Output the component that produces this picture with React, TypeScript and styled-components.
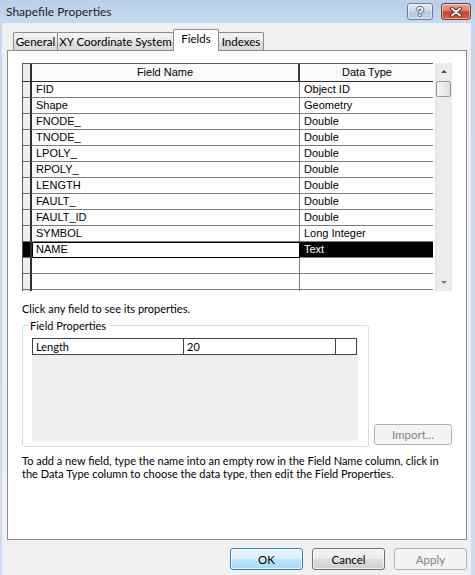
import React from "react";
import styled, { createGlobalStyle } from "styled-components";

const GlobalStyle = createGlobalStyle`
  html, body {
    margin: 0;
    padding: 0;
    background: #c8daf0;
  }
  body {
    font-family: Lato, "Noto Sans", "Liberation Sans", sans-serif;
    font-size: 11px;
    color: #000;
  }
`;

type FieldRow = { name: string; type: string };

const fields: FieldRow[] = [
  { name: "FID", type: "Object ID" },
  { name: "Shape", type: "Geometry" },
  { name: "FNODE_", type: "Double" },
  { name: "TNODE_", type: "Double" },
  { name: "LPOLY_", type: "Double" },
  { name: "RPOLY_", type: "Double" },
  { name: "LENGTH", type: "Double" },
  { name: "FAULT_", type: "Double" },
  { name: "FAULT_ID", type: "Double" },
  { name: "SYMBOL", type: "Long Integer" },
  { name: "NAME", type: "Text" },
  { name: "", type: "" },
  { name: "", type: "" },
  { name: "", type: "" },
];
const selectedIndex = 10;

/* window frame + caption */
const Window = styled.div`
  width: 475px;
  height: 575px;
  box-sizing: border-box;
  padding: 0 4px 0 2px;
  display: flex;
  flex-direction: column;
  overflow: hidden;
  background: linear-gradient(180deg, #b9cfe9 0px, #c6d9ef 22px, #cddcee 100%);
`;

const TitleBar = styled.div`
  height: 23px;
  flex: none;
  display: flex;
  align-items: flex-start;
  padding-left: 4px;
`;

const Caption = styled.div`
  flex: 1;
  font-size: 12px;
  line-height: 23px;
  color: #1e1e1e;
`;

const CaptionButtons = styled.div`
  display: flex;
  gap: 8px;
  padding-top: 3px;
`;

const CaptionButton = styled.div<{ $close?: boolean }>`
  width: ${(p) => (p.$close ? 30 : 26)}px;
  height: 17px;
  box-sizing: border-box;
  border: 1px solid ${(p) => (p.$close ? "#7a3b30" : "#6f7d92")};
  border-radius: 3px;
  display: flex;
  align-items: center;
  justify-content: center;
  background: ${(p) =>
    p.$close
      ? "linear-gradient(180deg, #e9a99a 0%, #d77a68 45%, #c2442e 55%, #d0654b 100%)"
      : "linear-gradient(180deg, #e6eef8 0%, #ccdaec 45%, #b4c8e2 55%, #c4d6ec 100%)"};
  box-shadow: inset 0 0 0 1px rgba(255, 255, 255, 0.45);
`;

const HelpGlyph = styled.span`
  font-family: "Liberation Sans", sans-serif;
  font-weight: bold;
  font-size: 13px;
  line-height: 13px;
  color: #fff;
  text-shadow: -1px 0 #5a6678, 1px 0 #5a6678, 0 -1px #5a6678, 0 1px #5a6678;
`;

/* dialog client area */
const Body = styled.div`
  flex: 1;
  background: #f0f0f0;
  padding: 6px 4px 0 5px;
  display: flex;
  flex-direction: column;
`;

const TabStrip = styled.div`
  height: 22px;
  display: flex;
  align-items: flex-end;
  padding-left: 6px;
  margin-bottom: -1px;
  position: relative;
  z-index: 1;
`;

const Tab = styled.div<{ $w: number; $active?: boolean }>`
  width: ${(p) => p.$w}px;
  height: ${(p) => (p.$active ? 22 : 18)}px;
  margin-bottom: ${(p) => (p.$active ? 0 : 1)}px;
  margin-left: -1px;
  box-sizing: border-box;
  border: 1px solid #898c95;
  border-bottom: none;
  border-radius: 2px 2px 0 0;
  display: flex;
  align-items: ${(p) => (p.$active ? "flex-start" : "center")};
  justify-content: center;
  padding-top: ${(p) => (p.$active ? 2 : 0)}px;
  font-size: 11.5px;
  white-space: nowrap;
  position: relative;
  z-index: ${(p) => (p.$active ? 2 : 1)};
  background: ${(p) =>
    p.$active
      ? "#fff"
      : "linear-gradient(180deg, #f3f3f3 0%, #ebebeb 50%, #dedede 51%, #d9d9d9 100%)"};
  &:first-child {
    margin-left: 0;
  }
`;

const Panel = styled.div`
  height: 490px;
  flex: none;
  box-sizing: border-box;
  background: #fff;
  border: 1px solid #898c95;
  padding: 12px 14px 0 14px;
  display: flex;
  flex-direction: column;
`;

/* field table */
const GridArea = styled.div`
  display: flex;
  gap: 2px;
  height: 228px;
  flex: none;
`;

const GridView = styled.div`
  width: 413px;
  height: 228px;
  overflow: hidden;
  font-family: "Liberation Sans", Arial, sans-serif;
  font-size: 11px;
`;

const GridRow = styled.div<{ $header?: boolean }>`
  display: grid;
  grid-template-columns: 10px 268px 135px;
  height: ${(p) => (p.$header ? 19 : 16)}px;
  box-sizing: border-box;
  border-top: ${(p) => (p.$header ? "1px solid #5c5c5c" : "none")};
`;

const RowHandle = styled.div<{ $active?: boolean; $header?: boolean }>`
  box-sizing: border-box;
  border-left: 1px solid #5c5c5c;
  border-right: 2px solid #2e2e2e;
  border-bottom: 1px solid ${(p) => (p.$header ? "#2e2e2e" : "#6b6b6b")};
  background: ${(p) => (p.$active ? "#000" : "#efefef")};
`;

const HeadCell = styled.div`
  box-sizing: border-box;
  background: #fafafa;
  border-right: 2px solid #3a3a3a;
  border-bottom: 1px solid #2e2e2e;
  text-align: center;
  line-height: 17px;
  &:last-child {
    border-right-width: 1px;
  }
`;

const Cell = styled.div<{ $focus?: boolean; $picked?: boolean }>`
  box-sizing: border-box;
  border-right: 1px solid ${(p) => (p.$focus ? "#000" : "#7c7c7c")};
  border-bottom: 1px solid ${(p) => (p.$focus ? "#000" : "#7c7c7c")};
  padding-left: 4px;
  line-height: 15px;
  white-space: nowrap;
  background: ${(p) => (p.$picked ? "#000" : "#fff")};
  color: ${(p) => (p.$picked ? "#fff" : "#000")};
  box-shadow: ${(p) => (p.$focus ? "inset 1px 1px 0 #000" : "none")};
`;

const ScrollBar = styled.div`
  width: 17px;
  height: 228px;
  display: flex;
  flex-direction: column;
  background: linear-gradient(90deg, #e3e3e3 0%, #ececec 20%, #ededed 80%, #e6e6e6 100%);
`;

const ScrollArrow = styled.div<{ $down?: boolean }>`
  height: 17px;
  flex: none;
  display: flex;
  align-items: center;
  justify-content: center;
  &::after {
    content: "";
    width: 0;
    height: 0;
    border-left: 3px solid transparent;
    border-right: 3px solid transparent;
    ${(p) => (p.$down ? "border-top: 3px solid #7a7a7a;" : "border-bottom: 3px solid #4f4f4f;")}
  }
`;

const ScrollThumb = styled.div`
  height: 16px;
  margin: 1px 1px 0 1px;
  box-sizing: border-box;
  border: 1px solid #979797;
  border-radius: 2px;
  background: linear-gradient(90deg, #f4f4f4 0%, #ececec 50%, #dedede 100%);
`;

const ScrollTrack = styled.div`
  flex: 1;
`;

/* lower half of the page */
const Hint = styled.div`
  margin-top: 10px;
  line-height: 15px;
  white-space: nowrap;
`;

const GroupRow = styled.div`
  display: flex;
  align-items: flex-end;
  gap: 5px;
  margin-top: 2px;
`;

const GroupBox = styled.fieldset`
  margin: 0;
  width: 347px;
  box-sizing: border-box;
  border: 1px solid #d5dfe5;
  border-radius: 3px;
  padding: 5px 9px 5px 9px;
`;

const GroupLabel = styled.legend`
  padding: 0 2px;
  margin-left: -4px;
  line-height: 15px;
`;

const PropArea = styled.div`
  width: 326px;
  height: 103px;
  background: #efefef;
`;

const PropRow = styled.div`
  display: grid;
  grid-template-columns: 151px 152px 21px;
  height: 17px;
  box-sizing: border-box;
  border: 1px solid #444;
  border-right: none;
  background: #fff;
  width: 325px;
`;

const PropCell = styled.div`
  border-right: 1px solid #444;
  padding-left: 3px;
  line-height: 15px;
`;

const DialogButton = styled.div<{ $default?: boolean; $disabled?: boolean; $w?: number }>`
  width: ${(p) => p.$w ?? 73}px;
  height: ${(p) => (p.$w ? 21 : 22)}px;
  box-sizing: border-box;
  border: 1px solid ${(p) => (p.$disabled ? "#adb2b5" : p.$default ? "#3c7fb1" : "#707070")};
  border-radius: 3px;
  display: flex;
  align-items: center;
  justify-content: center;
  font-size: 11.5px;
  color: ${(p) => (p.$disabled ? "#838383" : "#000")};
  background: ${(p) =>
    p.$disabled
      ? "#f4f4f4"
      : p.$default
      ? "linear-gradient(180deg, #eaf6fd 0%, #d9f0fc 50%, #bee6fd 51%, #a7d9f5 100%)"
      : "linear-gradient(180deg, #f2f2f2 0%, #ebebeb 50%, #dddddd 51%, #cfcfcf 100%)"};
  box-shadow: ${(p) => (p.$disabled ? "none" : "inset 0 0 0 1px rgba(255,255,255,0.7)")};
`;

const ImportButton = styled(DialogButton)`
  margin-bottom: 2px;
`;

const Note = styled.div`
  margin-top: 7px;
  line-height: 13px;
  white-space: nowrap;
`;

const Footer = styled.div`
  display: flex;
  justify-content: flex-end;
  gap: 9px;
  padding-top: 8px;
`;

const CloseIcon = () => (
  <svg width="12" height="10" viewBox="0 0 12 10">
    <path d="M2 1.5 L10 8.5 M10 1.5 L2 8.5" stroke="#5b2219" strokeWidth="4" strokeLinecap="round" />
    <path d="M2 1.5 L10 8.5 M10 1.5 L2 8.5" stroke="#fff" strokeWidth="2" strokeLinecap="round" />
  </svg>
);

const App = () => {
  return (
    <>
      <GlobalStyle />
      <Window>
        <TitleBar>
          <Caption>Shapefile Properties</Caption>
          <CaptionButtons>
            <CaptionButton>
              <HelpGlyph>?</HelpGlyph>
            </CaptionButton>
            <CaptionButton $close>
              <CloseIcon />
            </CaptionButton>
          </CaptionButtons>
        </TitleBar>
        <Body>
          <TabStrip>
            <Tab $w={45}>General</Tab>
            <Tab $w={117}>XY Coordinate System</Tab>
            <Tab $w={46} $active>
              Fields
            </Tab>
            <Tab $w={46}>Indexes</Tab>
          </TabStrip>
          <Panel>
            <GridArea>
              <GridView>
                <GridRow $header>
                  <RowHandle $header />
                  <HeadCell>Field Name</HeadCell>
                  <HeadCell>Data Type</HeadCell>
                </GridRow>
                {fields.map((f, i) => (
                  <GridRow key={i}>
                    <RowHandle $active={i === selectedIndex} />
                    <Cell $focus={i === selectedIndex}>{f.name}</Cell>
                    <Cell $picked={i === selectedIndex}>{f.type}</Cell>
                  </GridRow>
                ))}
              </GridView>
              <ScrollBar>
                <ScrollArrow />
                <ScrollThumb />
                <ScrollTrack />
                <ScrollArrow $down />
              </ScrollBar>
            </GridArea>
            <Hint>Click any field to see its properties.</Hint>
            <GroupRow>
              <GroupBox>
                <GroupLabel>Field Properties</GroupLabel>
                <PropArea>
                  <PropRow>
                    <PropCell>Length</PropCell>
                    <PropCell>20</PropCell>
                    <PropCell />
                  </PropRow>
                </PropArea>
              </GroupBox>
              <ImportButton $disabled $w={78}>
                Import...
              </ImportButton>
            </GroupRow>
            <Note>
              To add a new field, type the name into an empty row in the Field Name column, click in
              <br />
              the Data Type column to choose the data type, then edit the Field Properties.
            </Note>
          </Panel>
          <Footer>
            <DialogButton $default>OK</DialogButton>
            <DialogButton>Cancel</DialogButton>
            <DialogButton $disabled>Apply</DialogButton>
          </Footer>
        </Body>
      </Window>
    </>
  );
};

export default App;
